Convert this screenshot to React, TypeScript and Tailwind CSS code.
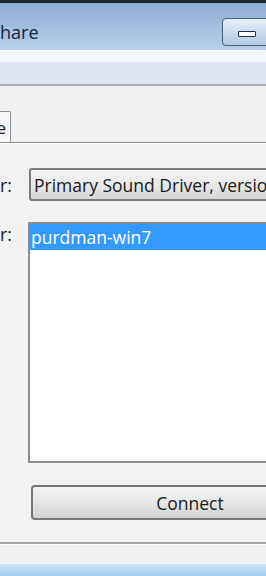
import React from 'react';

const font = { fontFamily: '"Open Sans", "Noto Sans", sans-serif' };

const App: React.FC = () => {
    return (
        <div className="w-[266px] h-[576px] overflow-hidden bg-[#f0f0f0] flex flex-col text-[#1a1a1a]" style={font}>
            {/* window frame top edge */}
            <div className="h-[3px] shrink-0 bg-[#1f2b2d]" />

            {/* title bar */}
            <div className="h-[47px] shrink-0 flex bg-gradient-to-b from-[#8eaed3] to-[#b8cfe8]">
                <span className="mt-[17px] text-[18px] leading-[24px] text-[#14233b] whitespace-nowrap">hare</span>
                <div className="mt-[15px] ml-auto -mr-[20px] w-[64px] h-[28px] shrink-0 rounded-[4px] border-[1.5px] border-[#4c5c71] bg-gradient-to-b from-[#e6eef7] via-[#cfdcec] to-[#b4c7de] pl-[15px] pt-[12px]">
                    <div className="w-[18px] h-[6px] rounded-[1px] border border-[#24344b] bg-white" />
                </div>
            </div>

            {/* frame bands */}
            <div className="h-[12px] shrink-0 bg-[#f3f6fb]" />
            <div className="h-[22px] shrink-0 bg-[#dee4f1]" />
            <div className="h-[2px] shrink-0 bg-[#acaeb6]" />

            {/* tab strip */}
            <div className="h-[57px] shrink-0 flex items-end border-b border-[#8d9098]">
                <div className="w-[11px] h-[31px] shrink-0 overflow-hidden border border-l-0 border-b-0 border-[#8d9098] rounded-tr-[2px] bg-[#f6f6f6] flex justify-end items-center pr-[4px]">
                    <span className="text-[17px] leading-none">e</span>
                </div>
            </div>

            {/* tab page */}
            <div className="h-[399px] shrink-0 border-t border-white bg-[#f2f2f2] pt-[24px] flex flex-col">
                <div className="flex items-center h-[33px]">
                    <div className="w-[29px] shrink-0 text-right pr-[20px] text-[17.5px] leading-[24px] whitespace-nowrap">r:</div>
                    <div className="w-[320px] h-[33px] shrink-0 rounded-[3px] border-2 border-[#7d7d7d] bg-gradient-to-b from-[#f4f4f4] via-[#e9e9e9] to-[#d6d6d6] flex items-center pl-[3px]">
                        <span className="text-[17.5px] leading-[24px] whitespace-nowrap">Primary Sound Driver, version</span>
                    </div>
                </div>

                <div className="flex items-start mt-[21px] h-[241px]">
                    <div className="w-[28px] shrink-0 text-right pr-[19px] text-[17.5px] leading-[24px] whitespace-nowrap">r:</div>
                    <div className="w-[320px] h-[241px] shrink-0 border-2 border-[#8a8c94] bg-white">
                        <div className="h-[26px] bg-[#3399ff] text-white text-[17.5px] leading-[26px] pl-[1px] whitespace-nowrap">purdman-win7</div>
                    </div>
                </div>

                <div className="flex mt-[22px]">
                    <div className="w-[31px] shrink-0" />
                    <button className="w-[318px] h-[35px] shrink-0 rounded-[4px] border-2 border-[#767676] bg-gradient-to-b from-[#f3f3f3] via-[#e6e6e6] to-[#d2d2d2] text-[17.5px] leading-[24px] text-[#1a1a1a]">
                        Connect
                    </button>
                </div>
            </div>

            {/* bottom edge */}
            <div className="h-[2px] shrink-0 bg-[#a3a3a3]" />
            <div className="h-[1px] shrink-0 bg-white" />
            <div className="h-[19px] shrink-0 bg-[#f0f0f0]" />
            <div className="h-[12px] shrink-0 bg-gradient-to-b from-[#cfe2f3] to-[#a3d2ef]" />
        </div>
    );
};

export default App;
